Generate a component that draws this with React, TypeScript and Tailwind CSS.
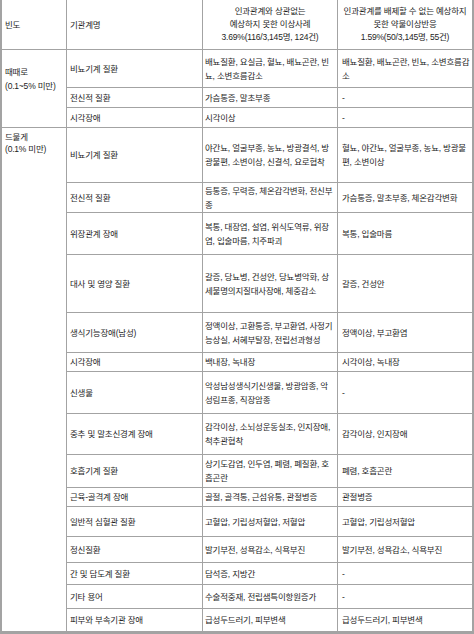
import { ReactNode } from 'react';

type Row = { organ: string; unexpected: string; adverse: string };

const occasional: Row[] = [
  {
    organ: '비뇨기계 질환',
    unexpected: '배뇨질환, 요실금, 혈뇨, 배뇨곤란, 빈뇨, 소변흐름감소',
    adverse: '배뇨질환, 배뇨곤란, 빈뇨, 소변흐름감소',
  },
  { organ: '전신적 질환', unexpected: '가슴통증, 말초부종', adverse: '-' },
  { organ: '시각장애', unexpected: '시각이상', adverse: '-' },
];

const rare: Row[] = [
  {
    organ: '비뇨기계 질환',
    unexpected: '야간뇨, 얼굴부종, 농뇨, 방광결석, 방광불편, 소변이상, 신결석, 요로협착',
    adverse: '혈뇨, 야간뇨, 얼굴부종, 농뇨, 방광불편, 소변이상',
  },
  {
    organ: '전신적 질환',
    unexpected: '등통증, 무력증, 체온감각변화, 전신부종',
    adverse: '가슴통증, 말초부종, 체온감각변화',
  },
  {
    organ: '위장관계 장애',
    unexpected: '복통, 대장염, 설염, 위식도역류, 위장염, 입술마름, 치주파괴',
    adverse: '복통, 입술마름',
  },
  {
    organ: '대사 및 영양 질환',
    unexpected: '갈증, 당뇨병, 건성안, 당뇨병악화, 상세불명의지질대사장애, 체중감소',
    adverse: '갈증, 건성안',
  },
  {
    organ: '생식기능장애(남성)',
    unexpected: '정액이상, 고환통증, 부고환염, 사정기능상실, 서혜부탈장, 전립선과형성',
    adverse: '정액이상, 부고환염',
  },
  { organ: '시각장애', unexpected: '백내장, 녹내장', adverse: '시각이상, 녹내장' },
  {
    organ: '신생물',
    unexpected: '악성남성생식기신생물, 방광암종, 악성림프종, 직장암종',
    adverse: '-',
  },
  {
    organ: '중추 및 말초신경계 장애',
    unexpected: '감각이상, 소뇌성운동실조, 인지장애, 척추관협착',
    adverse: '감각이상, 인지장애',
  },
  {
    organ: '호흡기계 질환',
    unexpected: '상기도감염, 인두염, 폐렴, 폐질환, 호흡곤란',
    adverse: '폐렴, 호흡곤란',
  },
  { organ: '근육-골격계 장애', unexpected: '골절, 골격통, 근섬유통, 관절병증', adverse: '관절병증' },
  { organ: '일반적 심혈관 질환', unexpected: '고혈압, 기립성저혈압, 저혈압', adverse: '고혈압, 기립성저혈압' },
  { organ: '정신질환', unexpected: '발기부전, 성욕감소, 식욕부진', adverse: '발기부전, 성욕감소, 식욕부진' },
  { organ: '간 및 담도계 질환', unexpected: '담석증, 지방간', adverse: '-' },
  { organ: '기타 용어', unexpected: '수술적중재, 전립샘특이항원증가', adverse: '-' },
  { organ: '피부와 부속기관 장애', unexpected: '급성두드러기, 피부변색', adverse: '급성두드러기, 피부변색' },
];

function Cell({ children, className = '' }: { children: ReactNode; className?: string }) {
  return <div className={`bg-white px-[3px] flex items-center break-all ${className}`}>{children}</div>;
}

function BodyRows({ rows }: { rows: Row[] }) {
  return (
    <>
      {rows.map((r, i) => (
        <div key={i} className="contents">
          <Cell>{r.organ}</Cell>
          <Cell className="pl-[2px]">{r.unexpected}</Cell>
          <Cell className="pl-[4px] pr-[2px]">{r.adverse}</Cell>
        </div>
      ))}
    </>
  );
}

export default function App() {
  return (
    <div
      className="w-[474px] h-[634px] bg-[#a3a3a3] px-[2px] pb-[3px] text-[8.5px] leading-[14px] tracking-[-0.2px] text-[#1e1e1e]"
      style={{ fontFamily: '"Liberation Sans", "Noto Sans CJK KR", sans-serif' }}
    >
      <div className="grid h-full gap-px bg-[#a3a3a3] grid-cols-[64px_135px_134px_134px] grid-rows-[49px_37px_19px_19px_54px_29px_41px_57px_39px_18px_41px_40px_32px_18px_29px_25px_21px_23px_22px]">
        {/* header */}
        <Cell>빈도</Cell>
        <Cell>기관계명</Cell>
        <Cell className="flex-col justify-center text-center leading-[13px]">
          <span>인과관계와 상관없는</span>
          <span>예상하지 못한 이상사례</span>
          <span>3.69%(116/3,145명, 124건)</span>
        </Cell>
        <Cell className="flex-col justify-center text-center leading-[13px]">
          <span>인과관계를 배제할 수 없는 예상하지</span>
          <span>못한 약물이상반응</span>
          <span>1.59%(50/3,145명, 55건)</span>
        </Cell>

        <div className="row-span-3 row-start-2 col-start-1 bg-white px-[3px] pt-[15px] flex flex-col">
          <span>때때로</span>
          <span>(0.1~5% 미만)</span>
        </div>
        <div className="row-span-15 row-start-5 col-start-1 bg-white px-[3px] pt-[3px] flex flex-col leading-[12px]">
          <span>드물게</span>
          <span>(0.1% 미만)</span>
        </div>

        <BodyRows rows={occasional} />
        <BodyRows rows={rare} />
      </div>
    </div>
  );
}
